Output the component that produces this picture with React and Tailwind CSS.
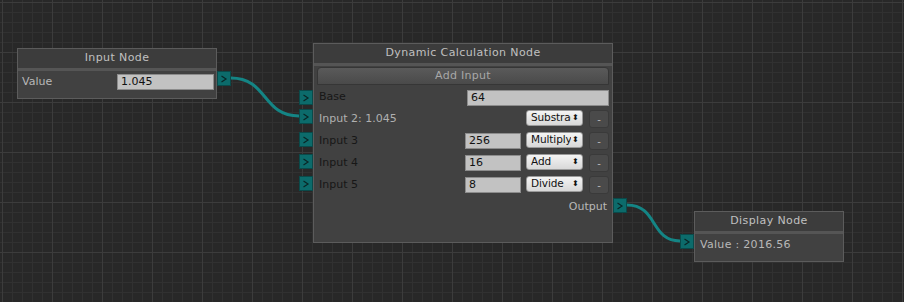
import React from 'react';

const font = { fontFamily: '"DejaVu Sans", "Verdana", sans-serif' };

const Knob = ({ className = '' }) => (
    <div className={`absolute w-[14px] h-[15px] bg-[#0c6b6b] border border-[#0a4a4a] flex items-center justify-center ${className}`}>
        <svg width="8" height="8" viewBox="0 0 8 8">
            <path d="M1.5 1 L6 4 L1.5 7" fill="none" stroke="#0a2626" strokeWidth="1.2" />
        </svg>
    </div>
);

const Field = ({ value, className = '' }) => (
    <div className={`h-[16px] bg-[#c2c2c2] border border-[#8c8c8c] text-[#111] text-[11px] leading-[14px] px-[3px] ${className}`}>{value}</div>
);

const Dropdown = ({ label }) => (
    <div className="w-[57px] h-[16px] rounded-[3px] bg-gradient-to-b from-[#f4f4f4] to-[#d8d8d8] border border-[#9a9a9a] flex items-center pl-[4px] pr-[3px] text-[10.5px] text-[#111]">
        <span className="flex-1 min-w-0 overflow-hidden whitespace-nowrap tracking-[-0.1px]">{label}</span>
        <span className="shrink-0 text-[8px] leading-none pl-[1px]">&#x2B0D;</span>
    </div>
);

const Minus = () => (
    <div className="w-[20px] h-[18px] rounded-[3px] bg-[#4a4a4a] border border-[#3a3a3a] flex items-center justify-center text-[#b8b8b8] text-[10px]">-</div>
);

const NodeTitle = ({ title }) => (
    <>
        <div className="h-[19px] bg-[#3c3c3c] flex items-center justify-center text-[#c0c0c0] text-[11px] tracking-[0.4px]">{title}</div>
        <div className="h-[3px] bg-[#555]" />
    </>
);

const Row = ({ label, labelClass = 'text-neutral-900', h = 'h-[22px]', children }) => (
    <div className={`${h} flex items-center pl-[5px] pr-[3px] text-[11px]`}>
        <span className={`flex-1 ${labelClass}`}>{label}</span>
        {children}
    </div>
);

const Controls = ({ value, op }) => (
    <div className="flex items-center gap-[5px]">
        {value && <Field value={value} className="w-[56px]" />}
        <div className="flex items-start gap-[6px] h-[18px]">
            <Dropdown label={op} />
            <Minus />
        </div>
    </div>
);

const App = () => {
    return (
        <div
            style={font}
            className="relative w-[904px] h-[302px] overflow-hidden bg-[#282828] bg-[image:linear-gradient(to_right,#3c3c3c_1px,transparent_1px),linear-gradient(to_bottom,#3c3c3c_1px,transparent_1px),linear-gradient(to_right,#313131_1px,transparent_1px),linear-gradient(to_bottom,#313131_1px,transparent_1px)] bg-[size:50px_50px,50px_50px,10px_10px,10px_10px] bg-[position:2px_2px]"
        >
            {/* wires */}
            <svg className="absolute inset-0" width="904" height="302">
                <path d="M231 78 C 268 78, 262 116, 299 116" fill="none" stroke="#148585" strokeWidth="3" />
                <path d="M627 205 C 658 205, 650 241, 680 241" fill="none" stroke="#148585" strokeWidth="3" />
            </svg>

            {/* Input Node */}
            <div className="absolute left-[17px] top-[48px] w-[200px] h-[51px] border border-[#5c5c5c] bg-[#414141] text-[11px]">
                <NodeTitle title="Input Node" />
                <div className="h-[22px] flex items-center pl-[4px] pr-[2px]">
                    <span className="flex-1 text-[#b8b8b8]">Value</span>
                    <Field value="1.045" className="w-[97px]" />
                </div>
            </div>
            <Knob className="left-[217px] top-[71px]" />

            {/* Dynamic Calculation Node */}
            <div className="absolute left-[313px] top-[43px] w-[300px] h-[200px] border border-[#5c5c5c] bg-[#414141]">
                <NodeTitle title="Dynamic Calculation Node" />
                <div className="mx-[3px] mt-[1px] h-[18px] rounded-t-[4px] bg-gradient-to-b from-[#5a5a5a] to-[#4a4a4a] border border-[#363636] flex items-center justify-center text-[#a8a8a8] text-[11px] tracking-[0.3px]">Add Input</div>
                <div className="mt-[2px]">
                    <Row label="Base" h="h-[21px]">
                        <Field value="64" className="w-[142px]" />
                    </Row>
                    <Row label="Input 2: 1.045" labelClass="text-[#b0b0b0]">
                        <Controls op="Substract" />
                    </Row>
                    <Row label="Input 3">
                        <Controls value="256" op="Multiply" />
                    </Row>
                    <Row label="Input 4">
                        <Controls value="16" op="Add" />
                    </Row>
                    <Row label="Input 5">
                        <Controls value="8" op="Divide" />
                    </Row>
                    <div className="h-[22px] flex items-center justify-end pr-[5px] text-[11px] text-[#b8b8b8]">Output</div>
                </div>
            </div>
            <Knob className="left-[299px] top-[90px]" />
            <Knob className="left-[299px] top-[109px]" />
            <Knob className="left-[299px] top-[132px]" />
            <Knob className="left-[299px] top-[154px]" />
            <Knob className="left-[299px] top-[176px]" />
            <Knob className="left-[613px] top-[198px]" />

            {/* Display Node */}
            <div className="absolute left-[694px] top-[211px] w-[150px] h-[51px] border border-[#5c5c5c] bg-[#414141] text-[11px]">
                <NodeTitle title="Display Node" />
                <div className="h-[22px] flex items-center pl-[5px] text-[#b8b8b8] tracking-[0.3px]">Value : 2016.56</div>
            </div>
            <Knob className="left-[680px] top-[234px]" />
        </div>
    );
};

export default App;
